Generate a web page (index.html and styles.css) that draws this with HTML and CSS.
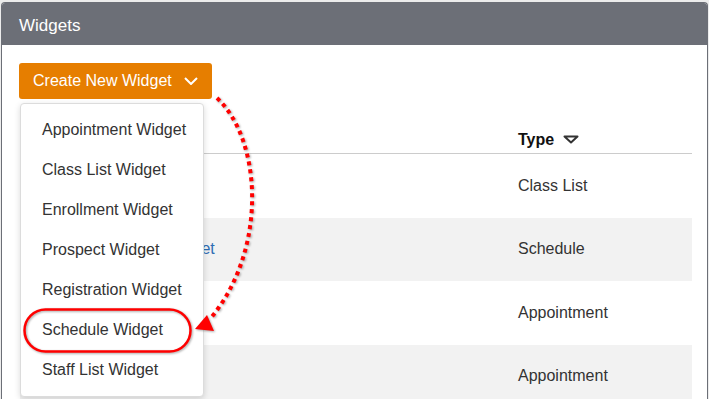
FILE: index.html
```html
<!DOCTYPE html>
<html>
<head>
<meta charset="utf-8">
<link rel="stylesheet" href="styles.css">
</head>
<body>
<div class="panel">
  <div class="panel-header">Widgets</div>
  <div class="panel-body">
    <div class="dropdown">
      <button class="btn">Create New Widget
        <svg class="chev" width="14" height="8" viewBox="0 0 14 8"><polyline points="1,1 7,7 13,1" fill="none" stroke="#fff" stroke-width="2"/></svg>
      </button>
      <ul class="menu">
        <li>Appointment Widget</li>
        <li>Class List Widget</li>
        <li>Enrollment Widget</li>
        <li>Prospect Widget</li>
        <li>Registration Widget</li>
        <li>Schedule Widget</li>
        <li>Staff List Widget</li>
      </ul>
    </div>
    <div class="table">
      <div class="row head">
        <div class="cell"></div>
        <div class="cell">Type
          <svg class="sort" width="16" height="9" viewBox="0 0 16 9"><polygon points="1.5,1.5 14.5,1.5 8,7.5" fill="none" stroke="#333" stroke-width="2" stroke-linejoin="round"/></svg>
        </div>
      </div>
      <div class="row"><div class="cell"></div><div class="cell">Class List</div></div>
      <div class="row alt"><div class="cell"><a class="link">Studio Schedule Widget</a></div><div class="cell">Schedule</div></div>
      <div class="row"><div class="cell"></div><div class="cell">Appointment</div></div>
      <div class="row alt"><div class="cell"></div><div class="cell">Appointment</div></div>
    </div>
  </div>
</div>
<svg class="annot" width="709" height="399" viewBox="0 0 709 399">
  <path d="M217,98 C262,140 268,250 210,319" fill="none" stroke="#f00" stroke-width="4" stroke-dasharray="4 4"/>
  <polygon points="195,329 207,315 214,331" fill="#f00"/>
  <rect x="24.5" y="309.5" width="166" height="42" rx="21" ry="21" fill="none" stroke="#f00" stroke-width="2.5"/>
</svg>
</body>
</html>
```

FILE: styles.css
```css
html, body {
  margin: 0;
  padding: 0;
}
body {
  background: #ececec;
  font-family: "Liberation Sans", Arial, sans-serif;
  font-size: 16px;
  color: #333;
  width: 709px;
  height: 399px;
  overflow: hidden;
  position: relative;
}
.panel {
  margin: 2px 1px 0 1px;
  height: 397px;
  box-sizing: border-box;
  border: 1px solid #6c6f77;
  border-bottom: none;
  border-radius: 4px 4px 0 0;
  background: #fff;
  overflow: hidden;
}
.panel-header {
  background: #6c6f77;
  color: #fff;
  height: 39px;
  line-height: 40px;
  padding-left: 17px;
  font-size: 17px;
  margin-top: -1px;
  padding-top: 4px;
}
.panel-body {
  padding: 18px 15px 0 17px;
}
.dropdown {
  position: relative;
  width: 193px;
}
.btn {
  display: flex;
  align-items: center;
  justify-content: space-between;
  width: 193px;
  height: 36px;
  padding: 0 14px;
  box-sizing: border-box;
  border: none;
  border-radius: 3px;
  background: #e67e00;
  color: #fff;
  font-family: "Liberation Sans", Arial, sans-serif;
  font-size: 16px;
}
.chev {
  display: block;
}
.menu {
  position: absolute;
  top: 40px;
  left: 1px;
  width: 184px;
  box-sizing: border-box;
  margin: 0;
  padding: 6px 0;
  list-style: none;
  background: #fff;
  border: 1px solid #dcdcdc;
  border-radius: 4px;
  box-shadow: 0 2px 6px rgba(0, 0, 0, 0.15);
  z-index: 5;
}
.menu li {
  height: 40px;
  line-height: 40px;
  padding-left: 21px;
  color: #333;
  white-space: nowrap;
}
.table {
  margin-left: 1px;
}
.row {
  display: grid;
  grid-template-columns: 490px 1fr;
  height: 63.5px;
  align-items: center;
}
.row.alt {
  background: #f2f2f2;
}
.row.head {
  height: auto;
  align-items: end;
  border-bottom: 1px solid #cccccc;
}
.row.head .cell {
  padding-top: 31px;
  padding-bottom: 3px;
  line-height: 20px;
  font-weight: bold;
  color: #111;
}
.cell {
  padding-left: 24px;
  white-space: nowrap;
}
.cell + .cell {
  padding-left: 8px;
}
.sort {
  margin-left: 4px;
  vertical-align: 1px;
}
.link {
  color: #2e6db4;
}
.annot {
  position: absolute;
  left: 0;
  top: 0;
  z-index: 10;
  filter: drop-shadow(1px 1px 1px rgba(0, 0, 0, 0.35));
}
```
